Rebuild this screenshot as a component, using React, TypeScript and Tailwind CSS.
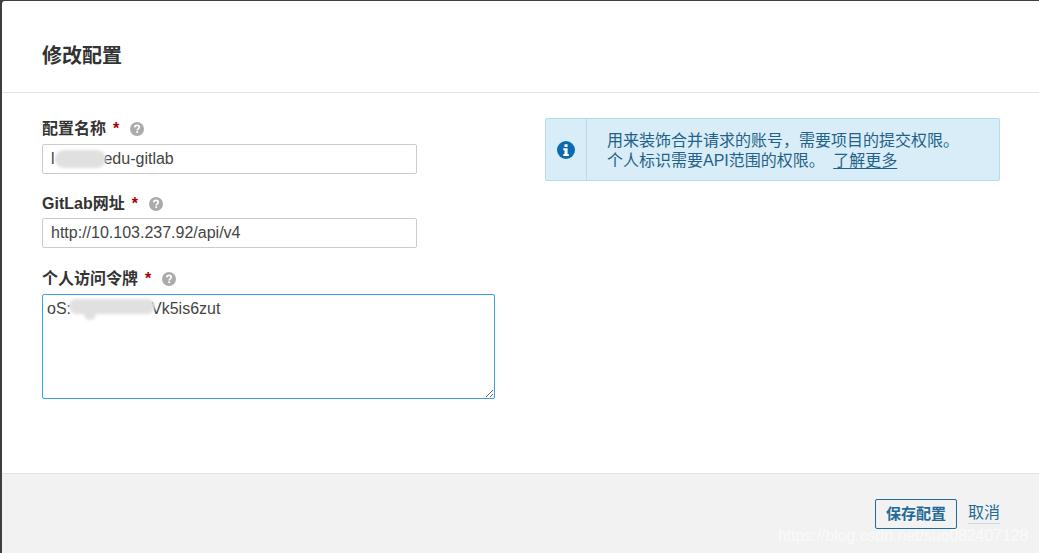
import React from "react";

function Help() {
  return (
    <svg viewBox="0 0 14 14" className="w-[14px] h-[14px] shrink-0" aria-hidden>
      <circle cx="7" cy="7" r="7" fill="#ababab" />
      <path d="M4.7 5.4C4.8 4.1 5.8 3.4 7 3.4c1.3 0 2.3.7 2.3 1.9 0 1.7-2.1 1.6-2.1 3.1" fill="none" stroke="#fff" strokeWidth="1.6" />
      <rect x="6.3" y="9.2" width="1.8" height="1.7" fill="#fff" />
    </svg>
  );
}

function Label({ text }: { text: string }) {
  return (
    <div className="flex items-center h-5 pt-px text-[16px] font-bold text-[#333333] leading-5">
      <span>{text}</span>
      <span className="ml-[7px] text-[#a80000] font-bold">*</span>
      <span className="ml-[11px]"><Help /></span>
    </div>
  );
}

function Blur({ className }: { className: string }) {
  return <div className={"absolute bg-[#e0e0e0] blur-[1.5px] rounded-full " + className} />;
}

export default function App() {
  return (
    <div className="w-[1039px] h-[553px] overflow-hidden bg-[#3f3f3f] pl-[2px] pt-px font-['Liberation_Sans','Noto_Sans_CJK_SC',sans-serif]">
      <div className="relative h-[552px] bg-white rounded-tl-[3px] flex flex-col">
        <header className="h-[92px] shrink-0 border-b border-[#e3e3e3] pl-10 flex items-center pt-[19px]">
          <h1 className="text-[20px] font-bold text-[#333333] leading-7">修改配置</h1>
        </header>

        <main className="flex-1 flex pl-10 pt-[25px]">
          <div className="w-[453px] shrink-0 flex flex-col">
            <Label text="配置名称" />
            <div className="relative mt-[6px]">
              <input
                readOnly
                value="l           edu-gitlab"
                className="block w-[375px] h-[30px] border border-[#cccccc] rounded-[2px] px-2 text-[16px] text-[#444444] bg-white outline-none"
              />
              <Blur className="left-[13px] top-[6px] w-[51px] h-[18px]" />
            </div>

            <div className="mt-[19px]"><Label text="GitLab网址" /></div>
            <input
              readOnly
              value="http://10.103.237.92/api/v4"
              className="block mt-[5px] w-[375px] h-[30px] border border-[#cccccc] rounded-[2px] px-2 text-[16px] text-[#444444] bg-white outline-none"
            />

            <div className="mt-5"><Label text="个人访问令牌" /></div>
            <div className="relative mt-[6px]">
              <textarea
                readOnly
                value={"oS:                  Vk5is6zut"}
                className="block w-[453px] h-[105px] border border-[#3d9fdc] rounded-[2px] px-1 py-1 text-[16px] leading-5 text-[#444444] bg-white outline-none resize-y"
              />
              <Blur className="left-[27px] top-[5px] w-[86px] h-[15px]" />
              <Blur className="left-[42px] top-[14px] w-[12px] h-[12px]" />
            </div>
          </div>

          <aside className="ml-[50px] w-[455px] h-[63px] border border-[#b3dcef] bg-[#d8edf7] rounded-[2px] flex text-[#1f6188]">
            <div className="w-[41px] shrink-0 border-r border-[#b3dcef] flex items-center justify-center">
              <svg viewBox="0 0 18 18" className="w-[18px] h-[18px]" aria-hidden>
                <circle cx="9" cy="9" r="9" fill="#0a6bb0" />
                <rect x="7.4" y="3.2" width="3.2" height="2.8" rx="0.5" fill="#fff" />
                <path d="M6.3 7.3h4.3v5.6h1.2v2H6.3v-2h1.2V9.3H6.3z" fill="#fff" />
              </svg>
            </div>
            <div className="pl-5 pt-[12px] text-[16px] leading-5">
              <p>用来装饰合并请求的账号，需要项目的提交权限。</p>
              <p>个人标识需要API范围的权限。 <a className="ml-[4px] underline underline-offset-2">了解更多</a></p>
            </div>
          </aside>
        </main>

        <footer className="h-[80px] shrink-0 bg-[#f2f2f2] border-t border-[#e3e3e3] flex items-start justify-end pr-[39px] pt-[25px] gap-[11px]">
          <button className="h-[30px] w-[82px] border border-[#236a97] rounded-[2px] text-[15px] leading-[26px] font-bold text-[#236a97] bg-transparent">保存配置</button>
          <a className="mt-[4px] text-[16px] leading-[20px] text-[#236a97] border-b border-[#c5d9e6]">取消</a>
        </footer>

        <span className="absolute left-[776px] top-[525px] text-[15.8px] leading-[20px] text-white/60 whitespace-nowrap pointer-events-none">https://blog.csdn.net/suo082407128</span>
      </div>
    </div>
  );
}
